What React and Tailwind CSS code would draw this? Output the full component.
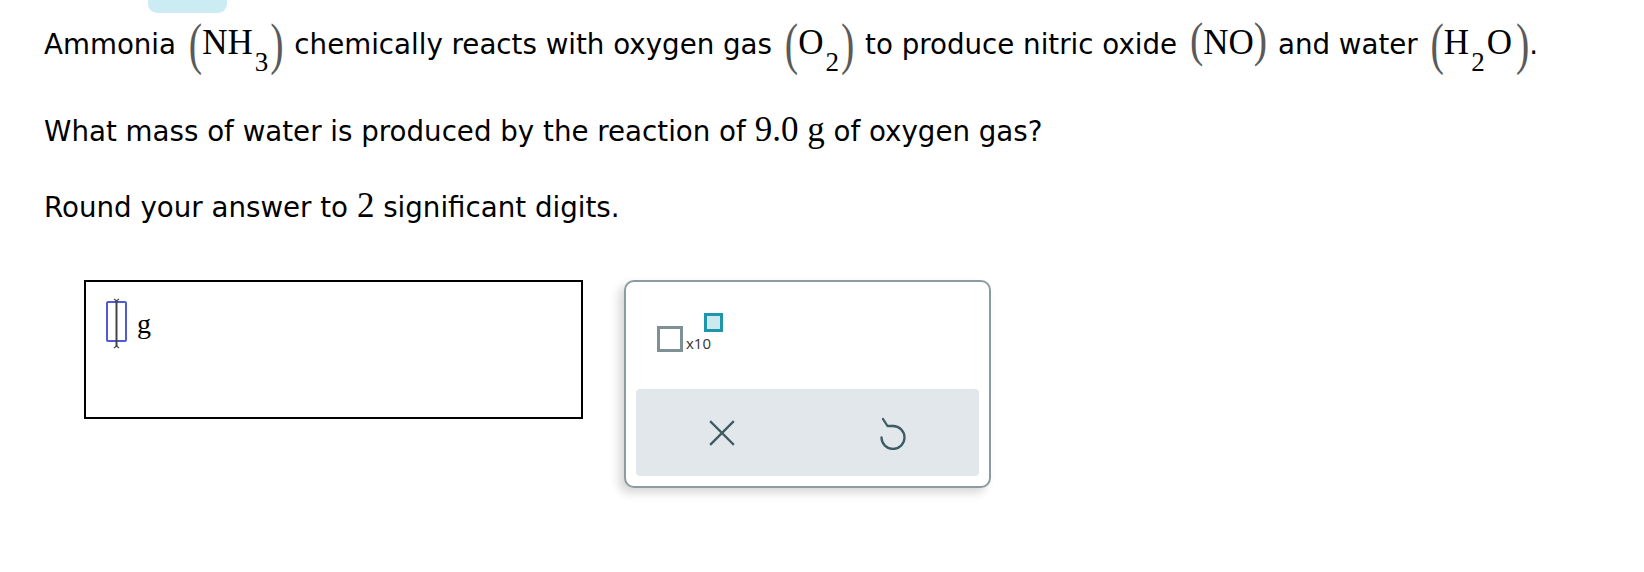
import React from "react";

const Paren = ({ ch, tall, close }) => (
  <span
    className={
      "inline-block leading-[0] text-[#5a5a5a] font-['Liberation_Serif',serif] text-[40px] " +
      (tall ? "scale-y-[1.4] translate-y-[4px] " : "scale-y-[1.2] -translate-y-[1px] ") +
      (close ? "mr-[2px]" : "ml-[4px]")
    }
  >
    {ch}
  </span>
);

const Sub = ({ children }) => (
  <span className="ml-[2px] mr-[2px] inline-block translate-y-[3px] font-['Liberation_Serif',serif] text-[27px] leading-[0] align-[-14px]">
    {children}
  </span>
);

const Math = ({ children }) => (
  <span className="font-['Liberation_Serif',serif] text-[35px] leading-[0]">{children}</span>
);

function XIcon() {
  return (
    <svg width="26" height="26" viewBox="0 0 26 26" fill="none" stroke="#3d5b63" strokeWidth="2.4" strokeLinecap="square">
      <path d="M2 2 L24 24 M24 2 L2 24" />
    </svg>
  );
}

function UndoIcon() {
  return (
    <svg width="28" height="34" viewBox="0 0 28 34" fill="none" stroke="#3d5b63" strokeWidth="2.3" strokeLinecap="round" strokeLinejoin="round">
      <path d="M14 10 A11.5 11.5 0 1 1 2.5 21.5" />
      <path d="M4 3 L8.5 10 L14 10" />
    </svg>
  );
}

export default function App() {
  return (
    <div className="min-h-[572px] w-[1644px] bg-white font-['DejaVu_Sans',Verdana,sans-serif] text-black">
      <div className="ml-[148px] h-[13px] w-[79px] rounded-b-[9px] bg-[#cbecf2]" />
      <div className="pl-[44px] text-[27.7px] leading-[28px]">
        <p className="mt-[18px] whitespace-nowrap">
          Ammonia{" "}
          <Paren ch="(" tall />
          <Math>NH</Math>
          <Sub>3</Sub>
          <Paren ch=")" tall close /> chemically reacts with oxygen gas{" "}
          <Paren ch="(" tall />
          <Math>O</Math>
          <Sub>2</Sub>
          <Paren ch=")" tall close /> to produce nitric oxide{" "}
          <Paren ch="(" />
          <Math>NO</Math>
          <Paren ch=")" close /> and water{" "}
          <Paren ch="(" tall />
          <Math>H</Math>
          <Sub>2</Sub>
          <Math>O</Math>
          <Paren ch=")" tall />.
        </p>
        <p className="mt-[59px] whitespace-nowrap">
          What mass of water is produced by the reaction of{" "}
          <Math>9.0</Math> <Math>g</Math> of oxygen gas?
        </p>
        <p className="mt-[48px] whitespace-nowrap">
          Round your answer to <Math>2</Math> significant digits.
        </p>
      </div>

      <div className="mt-[58px] flex items-start pl-[84px]">
        <div className="h-[139px] w-[499px] border-2 border-black">
          <div className="flex items-start pl-[20px] pt-[19px]">
            <div className="relative h-[41px] w-[21px] rounded-[2px] border-2 border-[#4f5bd6]">
              <svg className="absolute left-[3px] top-[-5px]" width="11" height="51" viewBox="0 0 11 51" fill="none" stroke="#444" strokeWidth="1.2">
                <path d="M5.5 3 L5.5 48" strokeWidth="2" />
                <path d="M3 1 L5.5 3 L8 1" />
                <path d="M3 50 L5.5 48 L8 50" />
              </svg>
            </div>
            <span className="ml-[10px] mt-[9px] font-['Liberation_Serif',serif] text-[28px] leading-[28px]">g</span>
          </div>
        </div>

        <div className="ml-[41px] flex h-[208px] w-[367px] flex-col rounded-[10px] border-2 border-[#8a9ca2] bg-white shadow-[-5px_5px_10px_rgba(0,0,0,0.16)]">
          <div className="flex items-start pl-[31px] pt-[31px]">
            <div className="mt-[13px] h-[26px] w-[26px] border-[3px] border-[#7d9197]" />
            <span className="ml-[3px] mt-[23px] font-['Open_Sans',sans-serif] text-[15px] leading-[15px] text-[#333]">x10</span>
            <div className="ml-[-7px] h-[19px] w-[19px] border-[3px] border-[#1c96a8] bg-[#cde9f0]" />
          </div>
          <div className="mt-auto px-[10px] pb-[10px]">
            <div className="grid h-[87px] grid-cols-2 rounded-[4px] bg-[#e1e7eb]">
              <div className="flex items-center justify-center">
                <XIcon />
              </div>
              <div className="flex items-center justify-center">
                <UndoIcon />
              </div>
            </div>
          </div>
        </div>
      </div>
    </div>
  );
}
